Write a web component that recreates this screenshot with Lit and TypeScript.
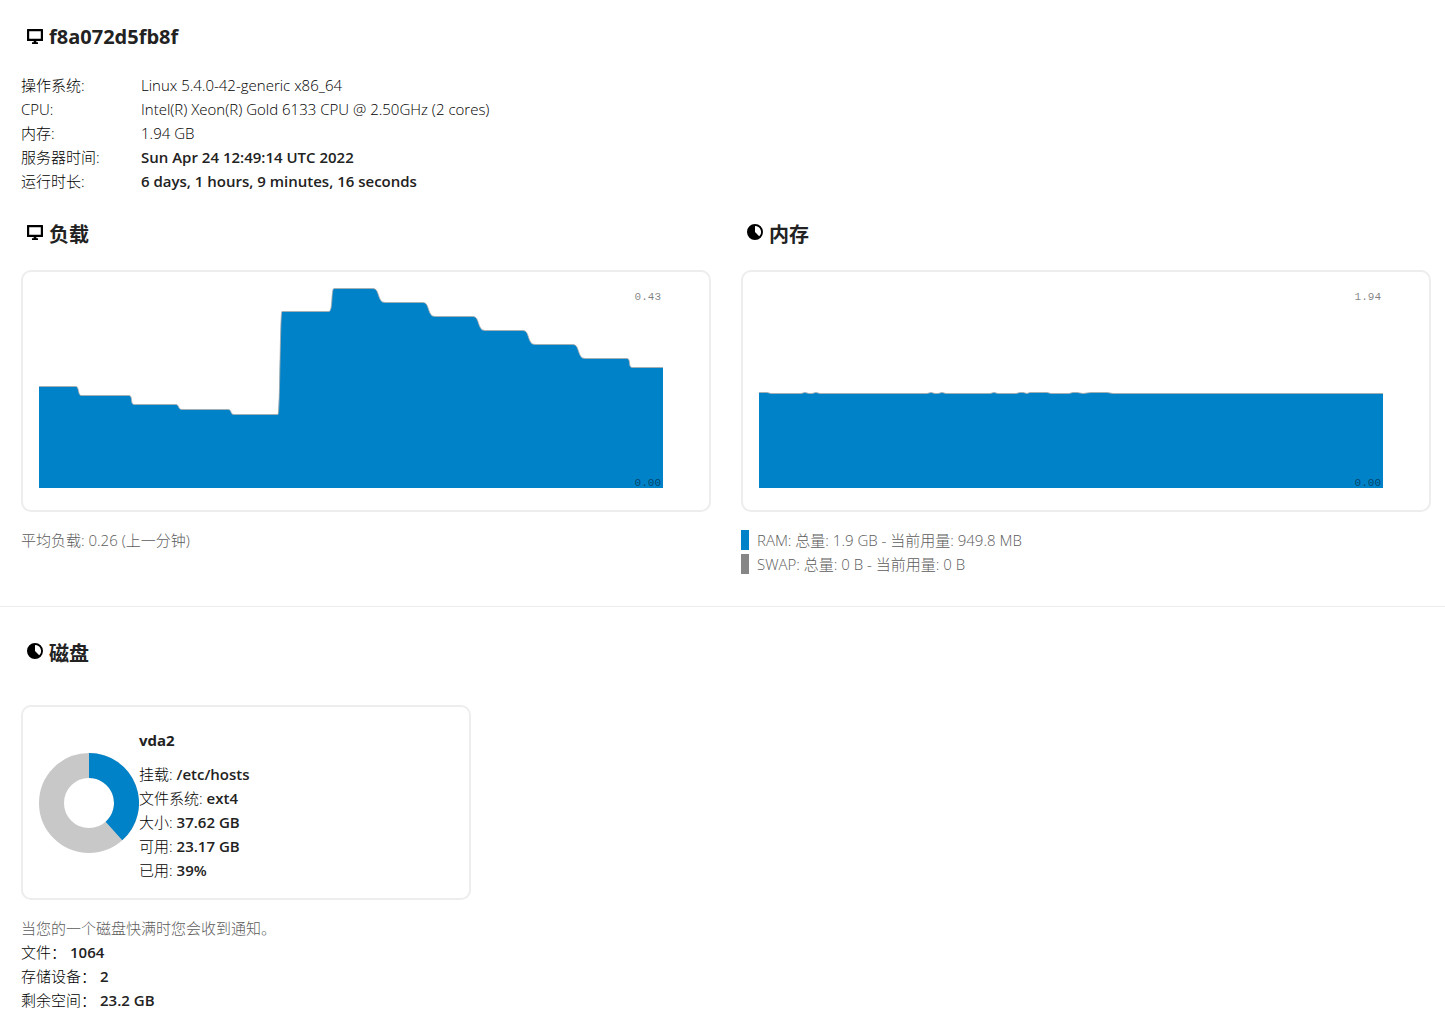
import { LitElement, html, svg, css } from "lit";
import { customElement, property } from "lit/decorators.js";

const sans = css`"Open Sans", "Noto Sans CJK SC", sans-serif`;

@customElement("status-icon")
class StatusIcon extends LitElement {
  @property() name = "screen";

  static styles = css`
    :host { display: block; width: 16px; height: 16px; }
    svg { display: block; width: 16px; height: 16px; }
  `;

  render() {
    const shape = this.name === "screen"
      ? svg`<path fill-rule="evenodd" d="M.5 1h15a.5.5 0 0 1 .5.5v11a.5.5 0 0 1-.5.5H9.300v1.200H11V16H5v-1.800h1.700V13H.5a.5.5 0 0 1-.5-.5v-11A.5.5 0 0 1 .5 1zM2.200 3.200v7.600h11.600V3.200z"/>`
      : svg`<path fill-rule="evenodd" d="M8 0a8 8 0 1 1 0 16A8 8 0 0 1 8 0zM8 2v6l4.200 4.300A6 6 0 0 0 8 2z"/>`;
    return html`<svg viewBox="0 0 16 16" aria-hidden="true">${shape}</svg>`;
  }
}

/** Area chart with its highest and lowest value printed at the right edge. */
@customElement("area-chart")
class AreaChart extends LitElement {
  @property() line = "";
  @property() max = "";
  @property() label = "";

  static styles = css`
    :host { display: block; border: 2px solid #ededed; border-radius: 10px; padding: 16px 46px 22px 16px; }
    .plot { position: relative; height: 200px; }
    svg { display: block; width: 100%; height: 200px; }
    .area { fill: #0082c9; }
    .line { fill: none; stroke: #aaa; stroke-opacity: 0.8; vector-effect: non-scaling-stroke; }
    .value {
      position: absolute; right: 2px;
      font: 11px/12px "Liberation Mono", monospace;
      color: rgba(0, 0, 0, 0.5);
    }
    .top { top: 3px; }
    .bottom { bottom: -1px; }
  `;

  render() {
    return html`
      <div class="plot">
        <svg viewBox="0 0 624 200" preserveAspectRatio="none" role="img" aria-label=${this.label}>
          <path class="area" d="${this.line}V200H0z"></path>
          <path class="line" d=${this.line}></path>
        </svg>
        <span class="value top">${this.max}</span>
        <span class="value bottom">0.00</span>
      </div>`;
  }
}

@customElement("disk-card")
class DiskCard extends LitElement {
  @property({ type: Number }) size = 0;
  @property({ type: Number }) free = 0;

  static styles = css`
    :host {
      display: flex; align-items: center; box-sizing: border-box;
      width: 450px; max-width: 100%;
      border: 2px solid #ededed; border-radius: 10px; padding: 16px;
    }
    .ring { flex: none; width: 100px; height: 100px; }
    .details { padding-top: 5px; }
    h3 { margin: 0 0 10px; font-size: 15px; line-height: 24px; font-weight: 700; color: #222; }
    dl { margin: 0; }
    .row { display: flex; gap: 4px; line-height: 24px; }
    dd { margin: 0; font-weight: 600; color: #222; }
  `;

  render() {
    const angle = (1 - this.free / this.size) * 2 * Math.PI;
    const at = (r: number) => `${50 + r * Math.sin(angle)} ${50 - r * Math.cos(angle)}`;
    const rows = [
      ["挂载:", "/etc/hosts"],
      ["文件系统:", "ext4"],
      ["大小:", `${this.size} GB`],
      ["可用:", `${this.free} GB`],
      ["已用:", "39%"],
    ];
    return html`
      <svg class="ring" viewBox="0 0 100 100" role="img" aria-label="已用 39%">
        <circle cx="50" cy="50" r="37.500" fill="none" stroke="#c8c8c8" stroke-width="25"></circle>
        <path fill="#0082c9" d="M50 0A50 50 0 0 1 ${at(50)}L${at(25)}A25 25 0 0 0 50 25z"></path>
      </svg>
      <div class="details">
        <h3>vda2</h3>
        <dl>${rows.map(([k, v]) => html`<div class="row"><dt>${k}</dt><dd>${v}</dd></div>`)}</dl>
      </div>`;
  }
}

const system = [
  ["操作系统:", "Linux 5.4.0-42-generic x86_64", false],
  ["CPU:", "Intel(R) Xeon(R) Gold 6133 CPU @ 2.50GHz (2 cores)", false],
  ["内存:", "1.94 GB", false],
  ["服务器时间:", "Sun Apr 24 12:49:14 UTC 2022", true],
  ["运行时长:", "6 days, 1 hours, 9 minutes, 16 seconds", true],
] as const;

const totals = [
  ["文件：", "1064"],
  ["存储设备：", "2"],
  ["剩余空间：", "23.2 GB"],
];

const loadLine =
  "M0 98.500H37C40 98.500 39 107.500 42 107.500H90C94 107.500 91 116.500 95 116.500H137C140 116.500 139 121.500 143 121.500H189C193 121.500 191 126.500 195 126.500H239C241 126.500 241 23.500 243 23.500H290C294 23.500 292 0.500 295 0.500" +
  "H334C341 0.500 338 14.500 346 14.500H384C391 14.500 388 28.500 396 28.500H434C441 28.500 438 42.500 446 42.500H484C491 42.500 488 56.500 496 56.500H534C541 56.500 538 70.500 546 70.500H588C592 70.500 589 79.500 593 79.500H624";

const memoryLine =
  "M0 104.500H8L12 105.500H42L46 104.500L50 105.500H53L57 104.500L61 105.500H168L172 104.500L176 105.500H179L183 104.500L187 105.500H231L235 104.500L239 105.500H257L261 104.500H264L268 105.500L271 104.500H288L292 105.500H310L314 104.500H318L324 105.500L332 104.500H348L354 105.500H624";

@customElement("app-root")
class AppRoot extends LitElement {
  static styles = css`
    :host {
      display: block; background: #fff; color: #000;
      font: 300 15px/24px ${sans};
    }
    .section { padding: 0 14px 0 21px; }
    .title { display: flex; align-items: center; gap: 6px; padding-left: 6px; }
    h1, h2 { margin: 0; font-size: 20px; line-height: 30px; font-weight: 700; color: #222; }
    .title status-icon { margin-bottom: 7px; }
    .host .title status-icon { margin-bottom: 2px; }
    .host { padding-top: 22px; }
    .info { margin: 21px 0 0; }
    .row { display: grid; grid-template-columns: 120px 1fr; }
    dl { margin: 0; }
    dd { margin: 0; }
    .strong { font-weight: 600; color: #222; }
    .charts { display: grid; grid-template-columns: 1fr 1fr; gap: 30px; padding-top: 27px; padding-bottom: 30px; }
    area-chart { margin: 20px 0 16px; }
    .note { margin: 0; color: #5c5c5c; }
    .legend { display: flex; align-items: center; gap: 8px; }
    .swatch { width: 8px; height: 20px; background: #0082c9; }
    .swap { background: #868686; }
    .disks { border-top: 1px solid #ededed; padding-top: 32px; padding-bottom: 6px; }
    disk-card { margin: 36px 0 16px; }
    .total { display: flex; gap: 4px; }
  `;

  render() {
    return html`
      <main>
        <section class="section host">
          <div class="title"><status-icon name="screen"></status-icon><h1>f8a072d5fb8f</h1></div>
          <dl class="info">
            ${system.map(([k, v, strong]) => html`
              <div class="row"><dt>${k}</dt><dd class=${strong ? "strong" : ""}>${v}</dd></div>`)}
          </dl>
        </section>
        <div class="section charts">
          <section>
            <div class="title"><status-icon name="screen"></status-icon><h2>负载</h2></div>
            <area-chart .line=${loadLine} max="0.43" label="负载"></area-chart>
            <p class="note">平均负载: 0.26 (上一分钟)</p>
          </section>
          <section>
            <div class="title"><status-icon name="disk"></status-icon><h2>内存</h2></div>
            <area-chart .line=${memoryLine} max="1.94" label="内存"></area-chart>
            <p class="note legend"><span class="swatch"></span>RAM: 总量: 1.9 GB - 当前用量: 949.8 MB</p>
            <p class="note legend"><span class="swatch swap"></span>SWAP: 总量: 0 B - 当前用量: 0 B</p>
          </section>
        </div>
        <section class="section disks">
          <div class="title"><status-icon name="disk"></status-icon><h2>磁盘</h2></div>
          <disk-card size="37.62" free="23.17"></disk-card>
          <p class="note">当您的一个磁盘快满时您会收到通知。</p>
          <dl>
            ${totals.map(([k, v]) => html`<div class="total"><dt>${k}</dt><dd class="strong">${v}</dd></div>`)}
          </dl>
        </section>
      </main>`;
  }
}
